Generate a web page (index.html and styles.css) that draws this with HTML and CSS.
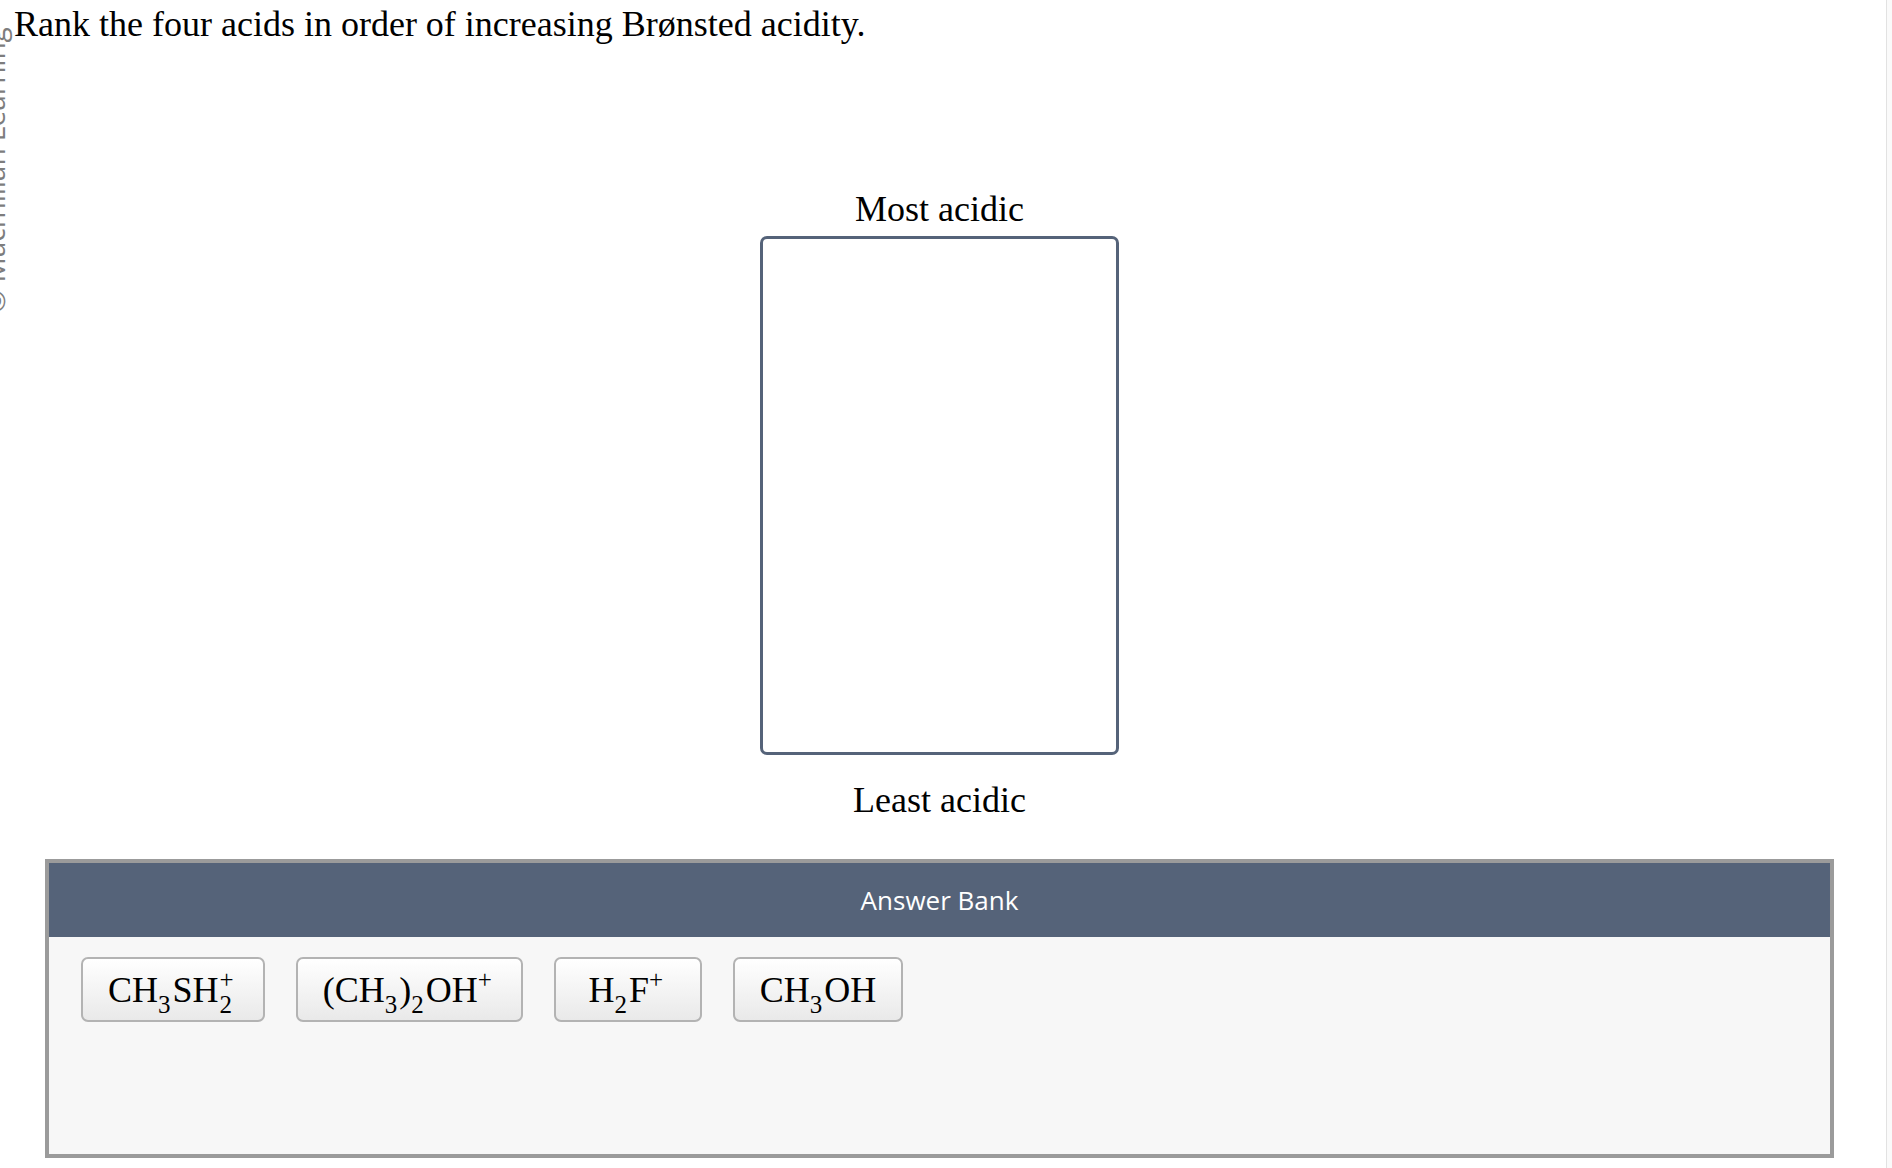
FILE: index.html
```html
<!DOCTYPE html>
<html lang="en">
<head>
<meta charset="utf-8">
<title>Rank the four acids</title>
<link rel="stylesheet" href="styles.css">
</head>
<body>
<div class="credit">© Macmillan Learning</div>
<main class="page">
  <h1 class="prompt">Rank the four acids in order of increasing Brønsted acidity.</h1>
  <section class="ranking">
    <div class="label label-top">Most acidic</div>
    <div class="dropzone"></div>
    <div class="label label-bottom">Least acidic</div>
  </section>
  <section class="bank">
    <div class="bank-head">Answer Bank</div>
    <div class="bank-body">
      <div class="chip"><span class="formula">CH<span class="sub">3</span>SH<span class="stack"><span class="stack-sup">+</span><span class="stack-sub">2</span></span></span></div>
      <div class="chip"><span class="formula">(CH<span class="sub">3</span>)<span class="sub">2</span>OH<span class="sup">+</span></span></div>
      <div class="chip"><span class="formula">H<span class="sub">2</span>F<span class="sup">+</span></span></div>
      <div class="chip"><span class="formula">CH<span class="sub">3</span>OH</span></div>
    </div>
  </section>
</main>
<div class="scrollbar"></div>
</body>
</html>
```

FILE: styles.css
```css
html, body {
  margin: 0;
  padding: 0;
  background: #ffffff;
}

body {
  font-family: "Liberation Serif", "Times New Roman", serif;
  color: #000000;
  position: relative;
  min-height: 1168px;
  overflow: hidden;
}

.credit {
  position: absolute;
  left: 0;
  top: 0;
  width: 330px;
  height: 30px;
  transform-origin: 0 0;
  transform: translate(-21px, 313px) rotate(-90deg);
  font-family: "Open Sans", "Liberation Sans", sans-serif;
  font-size: 28px;
  line-height: 30px;
  color: #7d7d7d;
  white-space: nowrap;
}

.page {
  width: 1879px;
  display: flex;
  flex-direction: column;
}

.prompt {
  margin: 4px 0 0 0;
  padding-left: 14px;
  font-size: 36px;
  font-weight: normal;
  line-height: 40px;
}

.ranking {
  display: flex;
  flex-direction: column;
  align-items: center;
  margin-top: 145px;
}

.label {
  font-size: 36px;
  line-height: 40px;
}

.dropzone {
  box-sizing: border-box;
  width: 359px;
  height: 519px;
  margin-top: 7px;
  border: 3px solid #556379;
  border-radius: 7px;
  background: #ffffff;
}

.label-bottom {
  margin-top: 25px;
}

.bank {
  margin: 39px 45px 0 45px;
  border: 4px solid #9b9b9b;
  display: flex;
  flex-direction: column;
}

.bank-head {
  height: 74px;
  background: #556379;
  color: #ffffff;
  font-family: "Open Sans", "Liberation Sans", sans-serif;
  font-size: 26px;
  display: flex;
  align-items: center;
  justify-content: center;
}

.bank-body {
  height: 217px;
  box-sizing: border-box;
  background: #f7f7f7;
  padding: 20px 32px 0 32px;
  display: flex;
  align-items: flex-start;
  gap: 31px;
}

.chip {
  box-sizing: border-box;
  height: 65px;
  min-width: 148px;
  padding: 0 25px;
  border: 2px solid #b3b3b3;
  border-radius: 7px;
  background: linear-gradient(#ffffff, #e9e9e9);
  display: flex;
  align-items: center;
  justify-content: center;
  font-size: 36px;
  line-height: 40px;
  white-space: nowrap;
}

.formula {
  display: block;
  height: 40px;
  line-height: 40px;
}

.sub {
  font-size: 25px;
  line-height: 0;
  vertical-align: -11px;
  margin-right: 2px;
}

.sup {
  font-size: 25px;
  line-height: 0;
  vertical-align: 14px;
  margin-right: 4px;
}

.stack {
  display: inline-flex;
  flex-direction: column;
  align-items: flex-start;
  font-size: 25px;
  line-height: 25px;
  vertical-align: 14px;
  margin: -6px 4px -14px 1px;
}

.scrollbar {
  position: fixed;
  top: 0;
  right: 0;
  width: 5px;
  height: 100%;
  border-left: 1px solid #e2e2e2;
  background: #fafafa;
}
```
